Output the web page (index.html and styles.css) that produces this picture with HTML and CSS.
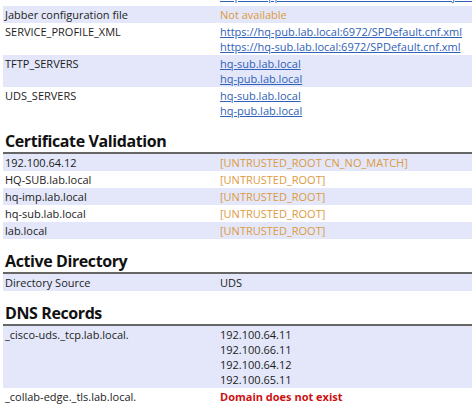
FILE: index.html
```html
<!DOCTYPE html>
<html>
<head>
<meta charset="utf-8">
<link rel="stylesheet" href="styles.css">
</head>
<body>
<div class="page">
  <section class="sec first">
    <div class="row cut">
      <div class="key"></div>
      <div class="val"><a href="#">https://hq-pub.lab.local:8443/cucm-uds/user/jabber/config</a></div>
    </div>
    <div class="row alt">
      <div class="key">Jabber configuration file</div>
      <div class="val warn">Not available</div>
    </div>
    <div class="row">
      <div class="key">SERVICE_PROFILE_XML</div>
      <div class="val"><a href="#">https://hq-pub.lab.local:6972/SPDefault.cnf.xml</a><br><a href="#">https://hq-sub.lab.local:6972/SPDefault.cnf.xml</a></div>
    </div>
    <div class="row alt">
      <div class="key">TFTP_SERVERS</div>
      <div class="val"><a href="#">hq-sub.lab.local</a><br><a href="#">hq-pub.lab.local</a></div>
    </div>
    <div class="row">
      <div class="key">UDS_SERVERS</div>
      <div class="val"><a href="#">hq-sub.lab.local</a><br><a href="#">hq-pub.lab.local</a></div>
    </div>
  </section>

  <section class="sec">
    <h2 class="title">Certificate Validation</h2>
    <div class="row alt"><div class="key">192.100.64.12</div><div class="val warn">[UNTRUSTED_ROOT CN_NO_MATCH]</div></div>
    <div class="row"><div class="key">HQ-SUB.lab.local</div><div class="val warn">[UNTRUSTED_ROOT]</div></div>
    <div class="row alt"><div class="key">hq-imp.lab.local</div><div class="val warn">[UNTRUSTED_ROOT]</div></div>
    <div class="row"><div class="key">hq-sub.lab.local</div><div class="val warn">[UNTRUSTED_ROOT]</div></div>
    <div class="row alt"><div class="key">lab.local</div><div class="val warn">[UNTRUSTED_ROOT]</div></div>
  </section>

  <section class="sec">
    <h2 class="title">Active Directory</h2>
    <div class="row alt"><div class="key">Directory Source</div><div class="val">UDS</div></div>
  </section>

  <section class="sec">
    <h2 class="title">DNS Records</h2>
    <div class="row alt"><div class="key">_cisco-uds._tcp.lab.local.</div><div class="val">192.100.64.11<br>192.100.66.11<br>192.100.64.12<br>192.100.65.11</div></div>
    <div class="row"><div class="key">_collab-edge._tls.lab.local.</div><div class="val error">Domain does not exist</div></div>
  </section>
</div>
</body>
</html>
```

FILE: styles.css
```css
html, body {
  margin: 0;
  padding: 0;
  background: #ffffff;
}

body {
  font-family: "Open Sans", "Noto Sans", sans-serif;
  font-size: 11px;
  color: #1c1c1c;
  overflow: hidden;
}

.page {
  width: 469px;
  margin-left: 3px;
  margin-top: -13px;
}

.sec + .sec {
  margin-top: 12px;
}

.title {
  margin: 0;
  font-size: 16px;
  font-weight: 700;
  letter-spacing: -0.4px;
  line-height: 21px;
  color: #111111;
  padding-left: 2px;
  border-bottom: 2px solid #666666;
}

.row {
  display: grid;
  grid-template-columns: 215px 1fr;
  line-height: 15px;
  padding: 1px 0 1px 2px;
  white-space: nowrap;
}

.row.cut {
  padding-bottom: 3px;
}

.row.alt {
  background: #e3e7f9;
}

.val {
  overflow: hidden;
}

.val a {
  color: #2f62b8;
  text-decoration: underline;
}

.warn {
  color: #dd9a3e;
}

.error {
  color: #cc1111;
  font-weight: 700;
}
```
